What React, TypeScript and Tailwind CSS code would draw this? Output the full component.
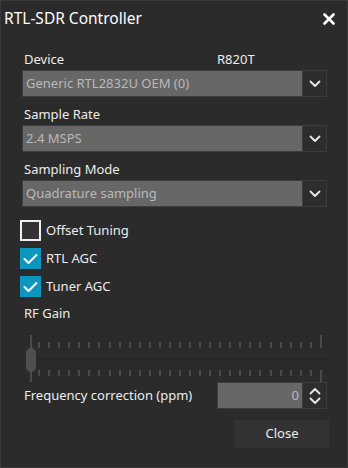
import React from "react";

function Chevron({ up = false }: { up?: boolean }) {
  return (
    <svg width="12" height="8" viewBox="0 0 12 8" fill="none">
      <path
        d={up ? "M1.5 6.5 L6 2 L10.5 6.5" : "M1.5 1.5 L6 6 L10.5 1.5"}
        stroke="#e8e8e8"
        strokeWidth="1.8"
        strokeLinecap="round"
        strokeLinejoin="round"
      />
    </svg>
  );
}

function Combo({ value }: { value: string }) {
  return (
    <div className="flex h-[27px] border border-[#3d3d3d]">
      <div className="flex flex-1 items-center bg-[#676767] pl-[3px] text-[#b9b9b9]">{value}</div>
      <div className="flex w-[24px] items-center justify-center border-l border-[#3d3d3d] bg-[#2d2d2d]">
        <Chevron />
      </div>
    </div>
  );
}

function Check({ label, checked }: { label: string; checked: boolean }) {
  return (
    <div className="flex h-[21px] items-center gap-[5px]">
      {checked ? (
        <div className="flex h-[21px] w-[21px] items-center justify-center bg-[#0e97be]">
          <svg width="15" height="12" viewBox="0 0 15 12" fill="none">
            <path d="M1.5 6 L5.5 10 L13.5 2" stroke="#ffffff" strokeWidth="2" strokeLinecap="round" strokeLinejoin="round" />
          </svg>
        </div>
      ) : (
        <div className="h-[21px] w-[21px] border-2 border-[#f0f0f0] bg-[#333333]" />
      )}
      <span>{label}</span>
    </div>
  );
}

export default function App() {
  const ticks = Array.from({ length: 29 }, (_, i) => i);

  return (
    <div
      className="flex h-[468px] w-[348px] flex-col border border-[#3a3a3a] bg-[#2b2b2b] text-[13px] text-[#ececec]"
      style={{ fontFamily: '"Noto Sans", "Open Sans", sans-serif' }}
    >
      <div className="flex h-[35px] items-center justify-between pl-[3px] pr-[12px]">
        <span className="text-[15.5px] text-white">RTL-SDR Controller</span>
        <svg width="12" height="12" viewBox="0 0 12 12">
          <path d="M1.5 1.5 L10.5 10.5 M10.5 1.5 L1.5 10.5" stroke="#ffffff" strokeWidth="2.6" strokeLinecap="round" />
        </svg>
      </div>

      <div className="flex flex-col pl-[21px] pr-[20px] pt-[14px]">
        <div className="flex h-[20px] items-center pl-[2px]">
          <span className="w-[193px]">Device</span>
          <span>R820T</span>
        </div>
        <Combo value="Generic RTL2832U OEM (0)" />

        <div className="mt-[7px] flex h-[21px] items-center pl-[2px]">Sample Rate</div>
        <Combo value="2.4 MSPS" />

        <div className="mt-[7px] flex h-[21px] items-center pl-[2px]">Sampling Mode</div>
        <Combo value="Quadrature sampling" />

        <div className="-ml-[2px] mt-[13px] flex flex-col gap-[7px]">
          <Check label="Offset Tuning" checked={false} />
          <Check label="RTL AGC" checked />
          <Check label="Tuner AGC" checked />
        </div>

        <div className="mt-[7px] flex h-[20px] items-center pl-[2px]">RF Gain</div>

        {/* slider */}
        <div className="relative mt-[6px] h-[52px]">
          <div className="absolute left-[8px] right-[0px] top-[28px] h-[2px] bg-[#262626]" />
          <div className="absolute left-[8px] top-[12px] flex w-[292px] items-end justify-between">
            {ticks.map((i) => (
              <div key={i} className={i === 0 ? "h-[6px] w-0" : "h-[6px] w-[2px] bg-[#4a4a4a]"} />
            ))}
            <div className="-mt-[7px] h-[13px] w-[2px] bg-[#4a4a4a]" />
          </div>
          <div className="absolute left-[8px] top-[40px] flex w-[292px] justify-between">
            {ticks.map((i) => (
              <div key={i} className={i === 0 ? "h-[6px] w-0" : "h-[6px] w-[2px] bg-[#4a4a4a]"} />
            ))}
            <div className="h-[12px] w-[2px] bg-[#4a4a4a]" />
          </div>
          <div className="absolute left-[8px] top-[5px] h-[47px] w-[2px] bg-[#4a4a4a]" />
          <div className="absolute left-[4px] top-[18px] h-[24px] w-[10px] rounded-[5px] bg-[#4f4f4f]" />
        </div>

        <div className="flex h-[27px] items-center">
          <span className="flex-1 pl-[2px]">Frequency correction (ppm)</span>
          <div className="flex h-[27px] w-[110px] border border-[#3d3d3d]">
            <div className="flex flex-1 items-center justify-end bg-[#676767] pr-[3px] text-[#b9b9b9]">0</div>
            <div className="flex w-[24px] flex-col items-center justify-center gap-[2px] border-l border-[#3d3d3d] bg-[#2d2d2d]">
              <Chevron up />
              <Chevron />
            </div>
          </div>
        </div>

        <div className="mt-[11px] flex justify-end">
          <div className="-mr-[2px] flex h-[28px] w-[94px] items-center justify-center bg-[#333333] text-[#ececec]">
            Close
          </div>
        </div>
      </div>
    </div>
  );
}
